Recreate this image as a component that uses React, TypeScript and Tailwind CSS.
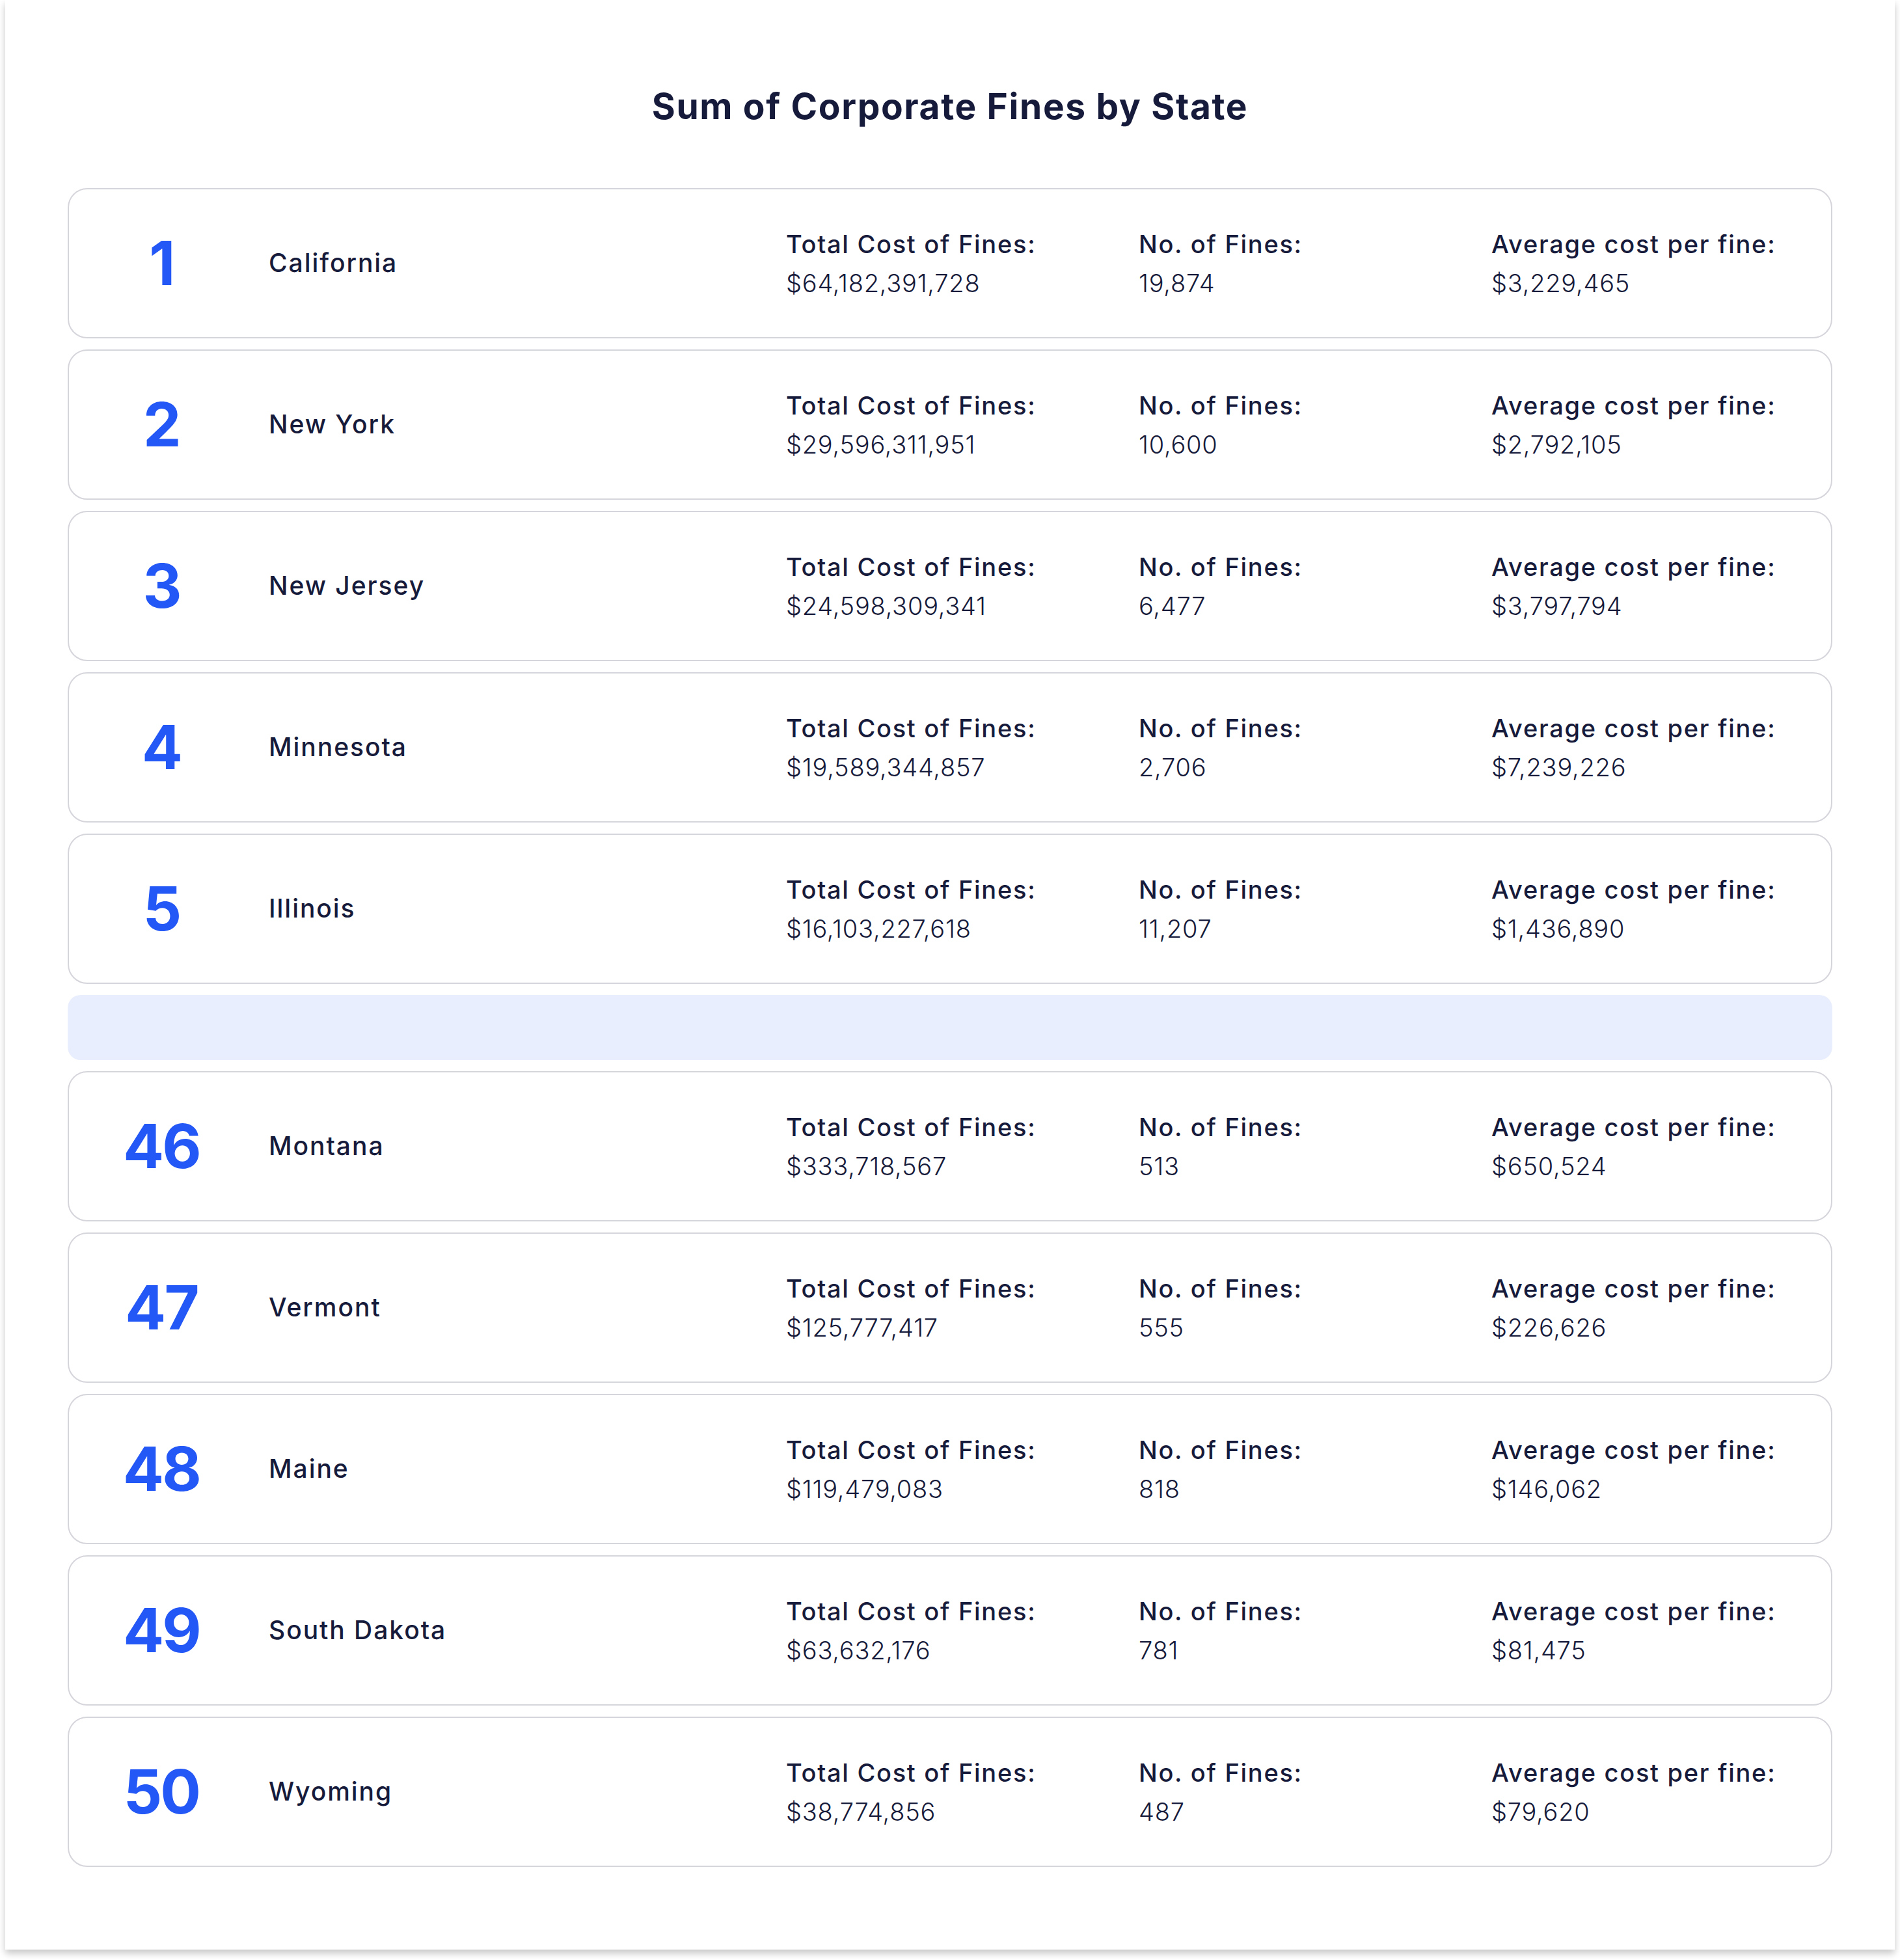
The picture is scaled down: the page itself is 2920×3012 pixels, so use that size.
import React from "react";

type Row = { rank: number; state: string; total: string; count: string; avg: string };

const top: Row[] = [
  { rank: 1, state: "California", total: "$64,182,391,728", count: "19,874", avg: "$3,229,465" },
  { rank: 2, state: "New York", total: "$29,596,311,951", count: "10,600", avg: "$2,792,105" },
  { rank: 3, state: "New Jersey", total: "$24,598,309,341", count: "6,477", avg: "$3,797,794" },
  { rank: 4, state: "Minnesota", total: "$19,589,344,857", count: "2,706", avg: "$7,239,226" },
  { rank: 5, state: "Illinois", total: "$16,103,227,618", count: "11,207", avg: "$1,436,890" },
];

const bottom: Row[] = [
  { rank: 46, state: "Montana", total: "$333,718,567", count: "513", avg: "$650,524" },
  { rank: 47, state: "Vermont", total: "$125,777,417", count: "555", avg: "$226,626" },
  { rank: 48, state: "Maine", total: "$119,479,083", count: "818", avg: "$146,062" },
  { rank: 49, state: "South Dakota", total: "$63,632,176", count: "781", avg: "$81,475" },
  { rank: 50, state: "Wyoming", total: "$38,774,856", count: "487", avg: "$79,620" },
];

function Stat({ label, value, className }: { label: string; value: string; className: string }) {
  return (
    <div className={className}>
      <div className="text-[38px] leading-[60px] font-medium tracking-[0.045em] whitespace-nowrap">{label}</div>
      <div className="text-[38px] leading-[60px] font-light tracking-[0.02em] whitespace-nowrap">{value}</div>
    </div>
  );
}

function RowCard({ r }: { r: Row }) {
  return (
    <div className="flex h-[231px] items-center rounded-[30px] border-2 border-[#d5d5dc] bg-white">
      <div className="w-[284px] text-center text-[93px] font-bold leading-none tracking-[-0.03em] text-[#2357f6]">
        {r.rank}
      </div>
      <div className="w-[818px] pl-[23px] text-[39px] font-medium tracking-[0.05em] whitespace-nowrap">
        {r.state}
      </div>
      <Stat className="w-[542px]" label="Total Cost of Fines:" value={r.total} />
      <Stat className="w-[542px]" label="No. of Fines:" value={r.count} />
      <Stat className="flex-1" label="Average cost per fine:" value={r.avg} />
    </div>
  );
}

export default function App() {
  return (
    <div
      className="w-[2920px] h-[3012px] bg-white px-[8px] text-[#171b3b]"
      style={{ fontFamily: "Inter, 'Noto Sans', sans-serif" }}
    >
      <div className="h-[2996px] bg-white px-[96px] pt-[130px] shadow-[0_6px_10px_rgba(0,0,0,0.22)]">
        <h1 className="text-center text-[55px] leading-[66px] font-bold tracking-[0.03em]">
          Sum of Corporate Fines by State
        </h1>
        <div className="mt-[93px] flex flex-col gap-[17px]">
          {top.map((r) => (
            <RowCard key={r.rank} r={r} />
          ))}
          <div className="h-[100px] rounded-[20px] bg-[#e8eefd]" />
          {bottom.map((r) => (
            <RowCard key={r.rank} r={r} />
          ))}
        </div>
      </div>
    </div>
  );
}
